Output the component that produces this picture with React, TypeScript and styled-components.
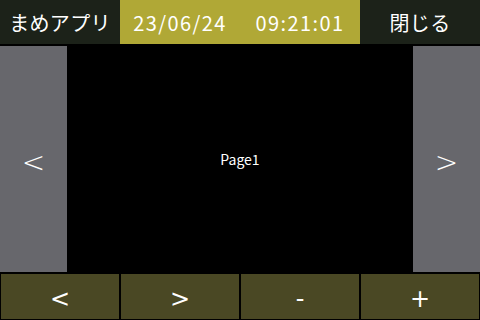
import React from "react";
import styled, { createGlobalStyle } from "styled-components";

const Global = createGlobalStyle`
  html, body { margin: 0; padding: 0; background: #000; }
  body { width: 480px; height: 320px; overflow: hidden; }
`;

const Screen = styled.div`
  width: 480px;
  height: 320px;
  background: #000;
  display: grid;
  grid-template-rows: 44px 1fr 46px;
  row-gap: 2px;
  font-family: "Noto Sans CJK JP", "Noto Sans", sans-serif;
  color: #fff;
`;

const TopBar = styled.div`
  display: grid;
  grid-template-columns: 120px 120px 120px 120px;
`;

const TopCell = styled.div<{ $tone: "dark" | "yellow" }>`
  display: flex;
  align-items: center;
  justify-content: center;
  background: ${(p) => (p.$tone === "dark" ? "#1c2219" : "#b0a836")};
  font-size: 20px;
  letter-spacing: ${(p) => (p.$tone === "yellow" ? "1.4px" : "0.3px")};
`;

const Middle = styled.div`
  display: grid;
  grid-template-columns: 67px 1fr 67px;
`;

const SideButton = styled.div`
  background: #67676c;
  display: flex;
  align-items: center;
  justify-content: center;
  font-family: "DejaVu Sans", sans-serif;
  font-size: 28px;
  font-weight: 300;
  padding-top: 6px;
`;

const Content = styled.div`
  display: flex;
  align-items: center;
  justify-content: center;
  font-size: 14px;
`;

const BottomBar = styled.div`
  display: grid;
  grid-template-columns: repeat(4, 1fr);
  padding: 0 1px 1px 1px;
  column-gap: 2px;
`;

const BottomButton = styled.div`
  background: #4a4824;
  display: flex;
  align-items: center;
  justify-content: center;
  font-family: "DejaVu Sans", sans-serif;
  font-size: 24px;
  padding-top: 4px;
`;

export default function App() {
  return (
    <>
      <Global />
      <Screen>
        <TopBar>
          <TopCell $tone="dark">まめアプリ</TopCell>
          <TopCell $tone="yellow">23/06/24</TopCell>
          <TopCell $tone="yellow">09:21:01</TopCell>
          <TopCell $tone="dark">閉じる</TopCell>
        </TopBar>
        <Middle>
          <SideButton>&lt;</SideButton>
          <Content>Page1</Content>
          <SideButton>&gt;</SideButton>
        </Middle>
        <BottomBar>
          <BottomButton>&lt;</BottomButton>
          <BottomButton>&gt;</BottomButton>
          <BottomButton>-</BottomButton>
          <BottomButton>+</BottomButton>
        </BottomBar>
      </Screen>
    </>
  );
}
